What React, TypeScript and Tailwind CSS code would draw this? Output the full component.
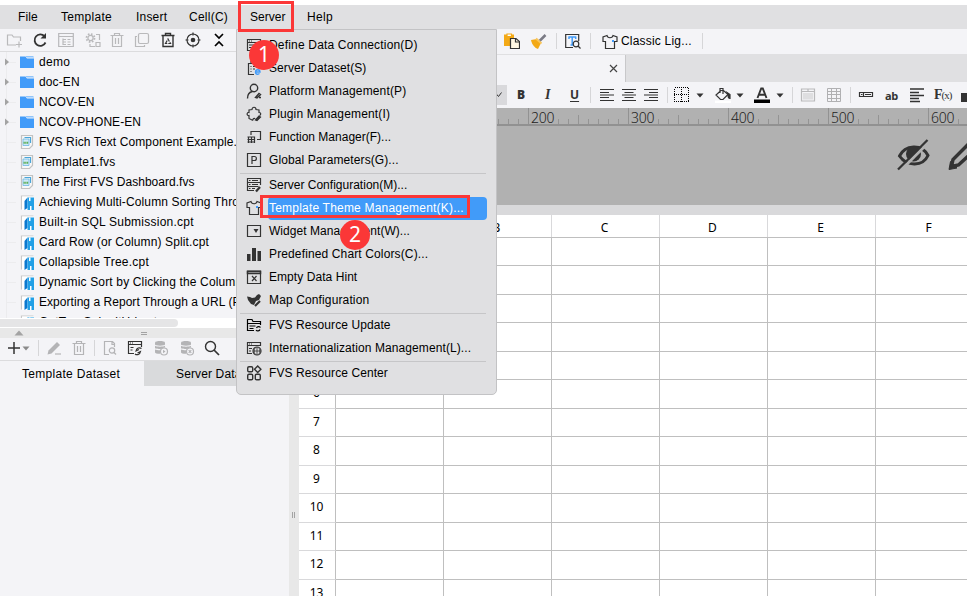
import type { ReactNode } from "react";
import clsx from "clsx";

interface IconProps {
  children: ReactNode;
  className?: string;
}

function Icon({ children, className }: IconProps) {
  return (
    <svg
      viewBox="0 0 16 16"
      fill="none"
      stroke="currentColor"
      strokeWidth="1.2"
      className={clsx("block h-4 w-4 shrink-0", className)}
    >
      {children}
    </svg>
  );
}

const windowFrame = <path d="M7 13.5H1.500v-12h13V7M1.500 4.500h13M3 3h1M5 3h1" />;

const shirt = (
  <>
    <path d="M5 1.500 1 3v4.500h2.500v7h9v-7H15V3l-4-1.500c-.5 3-5.500 3-6 0Z" />
    <path d="M10 6h2v2h-2z" fill="#419bf9" stroke="none" />
  </>
);

const icons: Record<string, ReactNode> = {
  define: <path d="M1.500 2.500h13v11h-13zM1.500 5.500h13M3 4h1M5 4h1M3 8h5M3 10.500h5" />,
  dataset: (
    <>
      <path d="M8 14.500H2.500v-11h10V7M5 3.500v-2h5v2M4.500 6.500h1M7 6.500h4M4.500 9h1M7 9h2M4.500 11.500h1" />
      <path d="M9.500 12h4.500c0-3-4.500-3-4.500 0s2.500 2.500 4 1.500" stroke="#419bf9" strokeWidth="1.400" />
    </>
  ),
  platform: (
    <>
      <circle cx="8" cy="5" r="3.700" strokeWidth="1.400" />
      <path d="M1.500 15.500c0-4 2-6.500 5-7M9.500 14.500l3.500-4 1.500 1-3.500 3.500zM13 14.500h2" strokeWidth="1.400" />
    </>
  ),
  plugin: (
    <>
      <path d="M7 14.500 3 12.500v-3c-2.500.5-2.500-3.500 0-3V4l3-.5c0-3 4-3 4 0l3 .5v2.500c2.500 0 2 2.500.500 3M7 14.500c-.5-2 1.500-2.500 2-1.500" />
      <path d="m9.500 14 3.500-4 1.500 1-3.500 3.500z" fill="currentColor" />
    </>
  ),
  func: (
    <>
      <path d="M5 6V2.500h9.500v8H11" />
      <path d="M1.500 8h7M1.500 10.500h7M1.500 13h7M2.500 7.500v6.500M5.500 7.500v6.500M8.500 7.500v6.500" strokeWidth="1.200" />
    </>
  ),
  global: <path d="M1.500 1.500h13v13h-13zM6 12V4.500h2.500c2.500 0 2.500 4 0 4H6" />,
  serverConfig: (
    <>
      <path d="M14.500 8V1.500h-13v4h13M1.500 5.500v4h11M1.500 9.500v4H8M3 3.500h1.500M6 3.500h6M3 7.500h1.500M6 7.500h6M3 11.500h1.500M6 11.500h3" />
      <path d="m10 14.500 4-4.500" strokeWidth="2.200" />
    </>
  ),
  theme: shirt,
  widget: (
    <>
      <path d="M1.500 2.500h13v11h-13z" />
      <path d="M7.500 6h5L10 10z" fill="currentColor" stroke="none" />
    </>
  ),
  chart: <path d="M1 8h3.500v7H1zM6 2h4v13H6zM11.500 5H15v10h-3.500z" fill="currentColor" stroke="none" />,
  empty: (
    <>
      <path d="M1.500 2h13v12.500h-13zM6 7l4.500 5M10.500 7 6 12" />
      <path d="M1.500 2.500h13v2h-13z" strokeWidth="1.500" />
    </>
  ),
  map: (
    <>
      <path d="m1 4.500 3 .5 2 1 3-.5L11 3l2-1 2 2-2 4-3 1-2 4-3-1-3-4z" fill="currentColor" stroke="none" />
      <path d="m9 14 5-5" strokeWidth="2.200" />
    </>
  ),
  resource: (
    <g className="text-black">
      <path d="M8 13.500H1.500v-11H6l1 2h7.500V8M1.500 6.500h13M3.500 9h6M3.500 11.500h4M14.500 10.500a2.300 2.300 0 0 0-4 .5M10 13a2.300 2.300 0 0 0 4-.5" />
    </g>
  ),
  international: (
    <>
      <path d="M6 13.500H1.500v-11h13V6M1.500 5.500h13M3 4h1M5 4h1M3 8.500h3M3 11h2" />
      <circle cx="11" cy="11" r="4" />
      <path d="M7 11h8M11 7v8M9 8c-1 2-1 4 0 6M13 8c1 2 1 4 0 6" strokeWidth=".8" />
    </>
  ),
  center: (
    <>
      <rect x="1.700" y="1.700" width="5" height="5" rx="1.300" strokeWidth="1.400" />
      <rect x="1.700" y="9.300" width="5" height="5.500" rx="1.300" strokeWidth="1.400" />
      <rect x="9.300" y="9.300" width="5" height="5.500" rx="1.300" strokeWidth="1.400" />
      <path d="m11.700 1 3.200 3.200-3.200 3.200-3.200-3.200z" strokeWidth="1.400" />
    </>
  ),
};

interface MenuEntry {
  icon: string;
  label: string;
  track: string;
  active?: boolean;
}

const menuGroups: MenuEntry[][] = [
  [
    { icon: "define", label: "Define Data Connection(D)", track: "tracking-[0.18px]" },
    { icon: "dataset", label: "Server Dataset(S)", track: "tracking-[0.08px]" },
    { icon: "platform", label: "Platform Management(P)", track: "tracking-[0.15px]" },
    { icon: "plugin", label: "Plugin Management(I)", track: "tracking-[0.15px]" },
    { icon: "func", label: "Function Manager(F)...", track: "tracking-[0px]" },
    { icon: "global", label: "Global Parameters(G)...", track: "tracking-[0.1px]" },
  ],
  [
    { icon: "serverConfig", label: "Server Configuration(M)...", track: "tracking-[0.01px]" },
    { icon: "theme", label: "Template Theme Management(K)...", track: "tracking-[0.2px]", active: true },
    { icon: "widget", label: "Widget Management(W)...", track: "tracking-[0.04px]" },
    { icon: "chart", label: "Predefined Chart Colors(C)...", track: "tracking-[0.13px]" },
    { icon: "empty", label: "Empty Data Hint", track: "tracking-[0.06px]" },
    { icon: "map", label: "Map Configuration", track: "tracking-[0.13px]" },
  ],
  [
    { icon: "resource", label: "FVS Resource Update", track: "tracking-[0.08px]" },
    { icon: "international", label: "Internationalization Management(L)...", track: "tracking-[0.09px]" },
  ],
  [{ icon: "center", label: "FVS Resource Center", track: "tracking-[0.08px]" }],
];

function ServerMenu() {
  return (
    <div className="absolute left-[236px] top-[29px] h-[366px] w-[261px] rounded-b-[5px] border border-[#c3c3c5] bg-[#e0e0e2] pt-1">
      {menuGroups.map((group, index) => (
        <div key={index}>
          {index > 0 && <div className="ml-[3px] mr-[10px] h-[2px] border-b border-[#c6c6c8]" />}
          {group.map((entry) => (
            <div key={entry.icon} className="flex h-[23px] items-center pl-[9px] pr-[9px] text-[#333]">
              <Icon className="mb-px">{icons[entry.icon]}</Icon>
              <span
                className={clsx(
                  "ml-[6px] flex h-full flex-1 items-center whitespace-nowrap rounded-[4px] pb-[2px] pl-px",
                  entry.track,
                  entry.active ? "bg-[#419bf9] text-white" : "text-black",
                )}
              >
                {entry.label}
              </span>
            </div>
          ))}
        </div>
      ))}
    </div>
  );
}

type FileKind = "folder" | "fvs" | "cpt";

const files: { name: string; kind: FileKind; track: string }[] = [
  { name: "demo", kind: "folder", track: "tracking-[0.3px]" },
  { name: "doc-EN", kind: "folder", track: "tracking-[0.13px]" },
  { name: "NCOV-EN", kind: "folder", track: "tracking-[0.13px]" },
  { name: "NCOV-PHONE-EN", kind: "folder", track: "tracking-[0.05px]" },
  { name: "FVS Rich Text Component Example.fvs", kind: "fvs", track: "tracking-[0.11px]" },
  { name: "Template1.fvs", kind: "fvs", track: "tracking-[0.18px]" },
  { name: "The First FVS Dashboard.fvs", kind: "fvs", track: "tracking-[0.03px]" },
  { name: "Achieving Multi-Column Sorting Through", kind: "cpt", track: "tracking-[0.14px]" },
  { name: "Built-in SQL Submission.cpt", kind: "cpt", track: "tracking-[0.24px]" },
  { name: "Card Row (or Column) Split.cpt", kind: "cpt", track: "tracking-[0.13px]" },
  { name: "Collapsible Tree.cpt", kind: "cpt", track: "tracking-[0.23px]" },
  { name: "Dynamic Sort by Clicking the Column", kind: "cpt", track: "tracking-[0.15px]" },
  { name: "Exporting a Report Through a URL (PDF)", kind: "cpt", track: "tracking-[0.04px]" },
  { name: "GetTreeSubmitUrl.cpt", kind: "cpt", track: "tracking-[0.13px]" },
];

function FileIcon({ kind }: { kind: FileKind }) {
  if (kind === "folder") {
    return (
      <Icon>
        <path d="M1 2.500h5.500l1.500 2h7v9.500H1z" fill="#419bf9" stroke="none" />
        <path d="M7 2.500h7.500M8 4h7" stroke="#8fc4fb" strokeWidth="1" />
      </Icon>
    );
  }
  if (kind === "fvs") {
    return (
      <Icon>
        <path d="M2.500 1.500h11v10l-3 3h-8z" fill="#f7f7f7" stroke="#c2c2c2" />
        <path d="M5.500 3.500h6v5.500" stroke="#4ba5d8" />
        <path d="M4 5h6v6.500H4z" fill="#cfe9f8" stroke="#6db8e2" strokeWidth=".8" />
        <path d="M4.500 8.700h5" stroke="#5faf55" strokeWidth="2" strokeDasharray="1.300 .4" />
      </Icon>
    );
  }
  return (
    <Icon>
      <path d="M2.500 15.500V2h12" stroke="#c9c9c9" />
      <path d="M3 2.500h12V16H3z" fill="#fff" stroke="none" />
      <path d="M5.500 7l3-3.500v10.500l-3 2z" fill="#0a78cf" stroke="none" />
      <path d="M8.500 3.500H15V16h-2.500v-4h-1.500v4H8.500z" fill="#22a0e6" stroke="none" />
      <path d="M10 3.500h1.500V7H10z" fill="#fff" stroke="none" />
    </Icon>
  );
}

function FileTree() {
  return (
    <div className="h-[266px] overflow-hidden">
      {files.map((file) => (
        <div key={file.name} className="flex h-5 items-center whitespace-nowrap">
          <svg viewBox="0 0 19 20" className="block h-5 w-[19px] shrink-0">
            <path d="M6.500 0v20M7 10.500h9" stroke="#ececee" />
            {file.kind === "folder" && <path d="M5 6.500v7l4-3.500z" fill="#a3a3a3" />}
          </svg>
          <FileIcon kind={file.kind} />
          <span className={clsx("ml-1", file.track)}>{file.name}</span>
        </div>
      ))}
    </div>
  );
}

const trash = <path d="M1.500 3.500h13M5.500 3.500v-2h5v2M3.500 3.500v11h9v-11M6.500 6v6M9.500 6v6" />;

const database = (
  <>
    <path d="M2 2.500c0-2 10-2 10 0v2c0 1.500-10 1.500-10 0z" fill="currentColor" stroke="none" />
    <path d="M2 5.800c2 1.200 8 1.200 10 0v1.700c-2 .3-4 1.300-4.500 1.500-2 0-5.500-.3-5.500-1zM2 9.500c1 .5 3 .8 5 .8v3.500c-3 0-5-.5-5-1.500z" fill="currentColor" stroke="none" />
    <circle cx="11" cy="11.500" r="3.500" />
  </>
);

function ExplorerToolbar() {
  return (
    <div className="flex h-[23px] items-center border-b border-[#dcdcde] pl-[6px] pb-[1px] text-[#b9b9bb]">
      <Icon>
        <path d="M10 13H1.500V3H6l1.500 2h7v4M13 9.500v6M10 12.500h6" />
      </Icon>
      <Icon className="ml-[10px] text-[#333]">
        <path d="M13.500 10.500A5.700 5.700 0 1 1 12.500 4.200" strokeWidth="1.800" />
        <path d="M14 1v5.500H8.500z" fill="currentColor" stroke="none" />
      </Icon>
      <Icon className="ml-[10px]">
        <path d="M.7 1.500h14.600v13H.7zM.7 4.500h14.600M5 6.500v6h3M5 7.500h3M5 10h3M9.500 7.500h3M9.500 10h3M9.500 12.500h3" />
      </Icon>
      <Icon className="ml-[11px]">
        <circle cx="5.500" cy="6" r="4" strokeWidth="1.800" strokeDasharray="1.600 1.540" />
        <circle cx="5.500" cy="6" r="2.600" />
        <path d="M11 2.500h3.500V8M5 12v2.500h5M11 10.500h4v4h-4z" />
      </Icon>
      <Icon className="ml-2">{trash}</Icon>
      <Icon className="ml-[9px]">
        <rect x="4.500" y="1.500" width="10" height="10" rx="1.500" />
        <path d="M3 4.500H1.500v10h9V13" />
      </Icon>
      <Icon className="ml-[10px] text-[#333]">
        <path d="M1.500 3.500h13M5.500 3.500v-2h5v2M3 3.500v11h10v-11" strokeWidth="1.400" />
        <path d="m5.500 11.500 2.500-4.500 2.500 4.500z" strokeDasharray="3.500 1" />
      </Icon>
      <Icon className="ml-[9px] text-[#333]">
        <circle cx="8" cy="8" r="6" />
        <circle cx="8" cy="8" r="2.300" fill="currentColor" stroke="none" />
        <path d="M8 .5v3M8 12.500v3M.5 8h3M12.500 8h3" />
      </Icon>
      <Icon className="ml-[10px] text-black">
        <path d="m4 2 4 4 4-4M4 14l4-4 4 4" strokeWidth="1.700" />
      </Icon>
    </div>
  );
}

function DatasetToolbar() {
  return (
    <div className="flex h-[23px] items-center border-b border-[#dcdcde] pb-[2px] pl-[6px] text-[#b4b4b6]">
      <Icon className="text-[#333]">
        <path d="M8 2v12M2 8h12" strokeWidth="1.500" />
      </Icon>
      <Caret className="text-[#8a8a8a]" />
      <Divider className="ml-2" />
      <Icon className="ml-[7px]">
        <path d="m1.500 14.500 1-4L11 2l3 3-8.500 8.500z" fill="currentColor" stroke="none" />
        <path d="M9 14h6" />
      </Icon>
      <Icon className="ml-[9px]">{trash}</Icon>
      <Divider className="ml-[7px]" />
      <Icon className="ml-[7px]">
        <path d="M7 14.500H2.500v-13h8l2 2V7M10 1.500v3h2.500" />
        <circle cx="10" cy="10.500" r="2.700" />
        <path d="m12 12.500 2 2" />
      </Icon>
      <Icon className="ml-[9px] text-[#333]">
        {windowFrame}
        <path d="M3.500 7.500h3M3.500 10h2" />
        <path d="M14.500 8.500c-2-1.500-5-.5-5.500 2.500l3-1.500M8 14c2 1.500 5 .5 5.500-2.500l-3 1.500" />
      </Icon>
      <Icon className="ml-[10px]">
        {database}
        <path d="M10 9.700v3.600l2.500-1.800z" fill="currentColor" stroke="none" />
      </Icon>
      <Icon className="ml-[10px]">
        {database}
        <path d="m9.700 10.200 2.600 2.600M12.300 10.200l-2.600 2.600" />
      </Icon>
      <Icon className="ml-[9px] text-[#333]">
        <circle cx="6.500" cy="6.500" r="5" strokeWidth="1.400" />
        <path d="m10 10 5 5" strokeWidth="1.700" />
      </Icon>
    </div>
  );
}

function Caret({ className }: { className?: string }) {
  return (
    <svg viewBox="0 0 8 8" className={clsx("block h-2 w-2 shrink-0", className)}>
      <path d="M.5 2.500h7L4 6.500z" fill="currentColor" />
    </svg>
  );
}

function Divider({ className }: { className?: string }) {
  return <div className={clsx("h-4 w-px shrink-0 bg-[#d6d6d8]", className)} />;
}

function Sidebar() {
  return (
    <aside className="flex w-[289px] shrink-0 flex-col bg-[#f4f4f7]">
      <ExplorerToolbar />
      <FileTree />
      <div className="h-[10px] bg-white pt-px">
        <div className="h-[8px] w-[178px] rounded-r bg-[#e5e5e6]" />
      </div>
      <div className="flex h-[10px] items-center bg-[#e8e8e8] pl-[14px]">
        <svg viewBox="0 0 10 6" className="block h-[6px] w-[10px]">
          <path d="M5 .5 9.500 5.500H.5z" fill="#a3a3a3" />
        </svg>
        <div className="ml-[117px] h-[3px] w-[6px] border-y border-[#a3a3a3]" />
      </div>
      <DatasetToolbar />
      <div className="flex h-[25px]">
        <div className="flex w-36 items-center pl-[22px] tracking-[0.3px]">Template Dataset</div>
        <div className="flex flex-1 items-center whitespace-nowrap bg-[#d9dadc] pl-8 tracking-[0.13px]">Server Dataset</div>
      </div>
    </aside>
  );
}

function MainToolbar() {
  return (
    <div className="flex h-[26px] items-center border-b border-[#e0e0e2] bg-[#f4f4f7] pb-px pl-[205px] text-[#333]">
      <Icon>
        <path d="M0 1.500h10V13H0z" fill="#f3a916" stroke="none" />
        <path d="M3 1h4.500v2.500H3z" fill="#fff" stroke="#f3a916" />
        <path d="M6.500 5.500h5.500l3.500 3v7h-9z" fill="#fff7e3" />
        <path d="M11.500 5.500v3.500h4" />
      </Icon>
      <Icon className="ml-[11px]">
        <path d="m0 7 6-1 4 4-3 6c-3-1-6-4-7-9z" fill="#f3a916" stroke="none" />
        <path d="m8.500 8 6-6" stroke="#7b7b85" strokeWidth="2.500" />
        <path d="m5 5.500 5.500 5" stroke="#f9c55b" strokeWidth="2" />
      </Icon>
      <Divider className="ml-[9px]" />
      <Icon className="ml-2">
        <path d="M8 14.500H.7V1.500h13V8" />
        <path d="M3.500 4h7.500M7.200 4v8M5.500 12H9M4 3.500V6M10.700 3.500V6" stroke="#419bf9" strokeWidth="1.500" />
        <circle cx="11" cy="11" r="2.800" fill="#f4f4f7" />
        <path d="m13 13 2.500 2.500" />
      </Icon>
      <Divider className="ml-[9px]" />
      <Icon className="ml-[11px] mt-px">{shirt}</Icon>
      <span className="ml-[3px] w-[71px] whitespace-nowrap tracking-[0.2px] text-black">Classic Lig...</span>
      <Divider className="ml-[10px]" />
    </div>
  );
}

function FormatToolbar() {
  return (
    <div className="flex h-[26px] items-center overflow-hidden bg-[#f4f4f7] pl-[190px] font-['Open_Sans',sans-serif] text-[#333]">
      <div className="flex h-5 w-[18px] shrink-0 items-center bg-[#d9d9dc] pl-[6px]">
        <svg viewBox="0 0 8 6" className="h-[6px] w-2" fill="none" stroke="currentColor">
          <path d="m.5 1 3 3.500 3-4" />
        </svg>
      </div>
      <span className="ml-[10px] w-2 text-[12px] font-extrabold">B</span>
      <span className="ml-5 w-2 font-['Liberation_Serif',serif] text-[14px] font-bold italic">I</span>
      <span className="ml-[17px] w-[9px] text-[12px] font-bold underline underline-offset-2">U</span>
      <Divider className="ml-[11px]" />
      <Icon className="ml-2">
        <path d="M1 2.500h14M1 5.500h9M1 8h14M1 10.500h9M1 13.500h14" />
      </Icon>
      <Icon className="ml-[6px]">
        <path d="M1 2.500h14M3.500 5.500h9M1 8h14M3.500 10.500h9M1 13.500h14" />
      </Icon>
      <Icon className="ml-[6px]">
        <path d="M1 2.500h14M6 5.500h9M1 8h14M6 10.500h9M1 13.500h14" />
      </Icon>
      <Divider className="ml-2" />
      <Icon className="ml-[6px] text-black">
        <path d="M.5.5h14v14H.5zM7.500 0v15M0 7.500h15" strokeWidth="1" strokeDasharray="1 1" shapeRendering="crispEdges" />
      </Icon>
      <Caret className="ml-[6px]" />
      <Icon className="ml-[11px]">
        <path d="M5 6V1.500h3V7M6 3.500 1 8l4.500 4.500H8l5-5-4.500-4z" />
        <path d="m12 5.500 3 2v4c-2 0-2-2-2-4z" fill="currentColor" />
        <path d="M0 13.500h16V16H0z" fill="#fff" stroke="none" />
      </Icon>
      <Caret className="ml-[5px]" />
      <Icon className="ml-[10px]">
        <path d="M3.500 11 7.200 1.500h1.600L12.500 11M5 7.800h6" strokeWidth="1.900" />
        <path d="M0 12.500h16V16H0z" fill="#000" stroke="none" />
      </Icon>
      <Caret className="ml-[6px]" />
      <Divider className="ml-2" />
      <Icon className="ml-[7px] text-[#b9b9bb]">
        <path d="M1.500 2h13v12h-13zM1.500 4.500h13M8 2v2.500" />
        <path d="M3 6h10v6.500H3z" fill="#dedee0" stroke="none" />
      </Icon>
      <Icon className="ml-[10px] text-[#b0b0b2]">
        <path d="M1.500 1.500h13v13h-13zM1.500 4.500h13M1.500 7.500h13M1.500 11.500h13M5.500 1.500v13M10.500 1.500v13" strokeWidth="1" />
      </Icon>
      <Divider className="ml-2" />
      <Icon className="ml-[7px]">
        <path d="M1.500 5.500h13v4h-13zM5.500 5.500v4" strokeWidth="1.200" />
        <path d="M3 7.500h1.500M7 7.500h6" />
      </Icon>
      <span className="ml-[11px] w-[13px] text-[11px] font-bold leading-none tracking-[-0.3px]">ab</span>
      <Icon className="ml-[11px]">
        <path d="M1 2h14M1 5.500h9M1 8.500h14M1 11.500h9M1 14.500h10" strokeWidth="1.600" />
      </Icon>
      <span className="ml-[9px] w-[17px] whitespace-nowrap font-['Liberation_Serif',serif] text-[14px] font-bold tracking-[-1px]">
        F<span className="text-[11px] font-normal">(x)</span>
      </span>
      <div className="ml-[10px] mt-1 h-[9px] w-[6px] shrink-0 bg-[#333]" />
    </div>
  );
}

const rulerMarks = [0, 100, 200, 300, 400, 500, 600];
const ticks = [3, 4, 5, 6, 7, 8, 9];

function Ruler() {
  return (
    <div className="flex h-[18px] overflow-hidden border-b-2 border-[#919191] bg-[#b1b1b1] pl-[29px]">
      {rulerMarks.map((mark) => (
        <div key={mark} className="flex w-[100px] shrink-0 items-end border-l border-[#929292]">
          <span className="flex h-full w-[29px] shrink-0 items-center pl-[2px] pt-[3px] font-['Noto_Sans',sans-serif] text-[14px] font-light leading-none tracking-[-0.2px] text-[#222]">
            {mark}
          </span>
          {ticks.map((tick) => (
            <div
              key={tick}
              className={clsx("w-[10px] shrink-0 border-l border-[#949494]", tick === 5 ? "h-[9px]" : "h-[5px]")}
            />
          ))}
        </div>
      ))}
    </div>
  );
}

function ReportHeader() {
  return (
    <div className="flex h-[79px] overflow-hidden bg-[#b1b1b1] pl-[598px] pt-[13px] text-[#333]">
      <svg viewBox="0 0 34 32" className="h-8 w-[34px] shrink-0" fill="none" stroke="currentColor">
        <path d="M2.500 17C8 5.500 25 4.500 31 16.500 26 27.500 10 28 2.500 17Z" strokeWidth="3" />
        <circle cx="16.500" cy="15" r="7.500" fill="currentColor" stroke="none" />
        <path d="M3.500 31.500 32 3" stroke="#b1b1b1" strokeWidth="3" />
        <path d="M1 30.500 30.500 1" strokeWidth="2.300" />
      </svg>
      <svg viewBox="0 0 30 30" className="ml-[17px] mt-[2px] h-[30px] w-[30px] shrink-0" fill="none" stroke="currentColor">
        <path d="m3.500 25.500 1.500-7L20 3.500l6 6L10.500 24z" strokeWidth="3.500" />
        <path d="m1 28.500 1.500-8 6.500 6.500z" fill="currentColor" />
      </svg>
    </div>
  );
}

const columns = ["A", "B", "C", "D", "E", "F"];
const rows = [1, 2, 3, 4, 5, 6, 7, 8, 9, 10, 11, 12, 13];

function Sheet() {
  return (
    <div className="flex-1 overflow-hidden bg-white font-['Noto_Sans',sans-serif] text-[12px] text-black">
      <div className="flex h-[23px] border-b border-[#bfbfbf]">
        <div className="w-[37px] shrink-0 border-r border-[#d9d9db]" />
        {columns.map((column) => (
          <div key={column} className="flex w-[108px] shrink-0 items-center justify-center border-r border-[#d9d9db] pr-[2px] pt-[4px]">
            {column}
          </div>
        ))}
      </div>
      {rows.map((row) => (
        <div key={row} className={clsx("flex", row % 2 ? "h-[28px]" : "h-[29px]")}>
          <div className="flex w-[37px] shrink-0 items-center justify-center border-b border-r border-b-[#d9d9db] border-r-[#bfbfbf] pb-[2px] pr-px">
            {row}
          </div>
          {columns.map((column) => (
            <div key={column} className="w-[108px] shrink-0 border-b border-r border-[#bfbfbf]" />
          ))}
        </div>
      ))}
    </div>
  );
}

function Workspace() {
  return (
    <main className="flex min-w-0 flex-1 flex-col">
      <MainToolbar />
      <div className="flex h-[27px] bg-[#e0e0e2]">
        <div className="flex w-[327px] items-center justify-end border-r border-[#c8c8ca] bg-[#f4f4f7] pr-[7px]">
          <svg viewBox="0 0 9 9" className="h-[9px] w-[9px]" stroke="#444" strokeWidth="1.200">
            <path d="m1 1 7 7M8 1 1 8" />
          </svg>
        </div>
      </div>
      <FormatToolbar />
      <Ruler />
      <ReportHeader />
      <div className="h-[10px] shrink-0 bg-[#d9d9db]" />
      <Sheet />
    </main>
  );
}

const menuBar = [
  { label: "File", className: "w-[43px] tracking-[0.1px]" },
  { label: "Template", className: "w-[75px] tracking-[0.3px]" },
  { label: "Insert", className: "w-[53px] tracking-[0.2px]" },
  { label: "Cell(C)", className: "w-[61px] tracking-[0.25px]" },
  { label: "Server", className: "w-[57px] tracking-[0.05px]" },
  { label: "Help", className: "w-[60px] tracking-[0.3px]" },
];

export default function App() {
  return (
    <div className="relative flex h-[596px] w-[967px] flex-col overflow-hidden bg-white pt-[5px] font-['Liberation_Sans',Arial,sans-serif] text-[12px] leading-4 text-black">
      <nav className="flex h-6 shrink-0 items-center bg-[#e0e0e2] pl-[18px]">
        {menuBar.map((item) => (
          <span key={item.label} className={item.className}>
            {item.label}
          </span>
        ))}
      </nav>
      <div className="flex min-h-0 flex-1">
        <Sidebar />
        <div className="flex w-[10px] shrink-0 items-center justify-center bg-[#e8e8e8] pr-[2px] pt-[405px]">
          <div className="h-[6px] w-[3px] border-x border-[#a3a3a3]" />
        </div>
        <Workspace />
      </div>

      <ServerMenu />

      {/* Step callouts */}
      <div className="absolute left-[238px] top-px h-[31px] w-[56px] border-[3px] border-[#fb3737]" />
      <div className="absolute left-[260px] top-[195px] h-[23px] w-[210px] border-[3px] border-[#fb3737]" />
      <div className="absolute left-[249px] top-[40px] flex h-[30px] w-[30px] items-center justify-center rounded-full bg-[#fb3737] pb-[2px] font-['Noto_Sans',sans-serif] text-[21px] text-white">
        1
      </div>
      <div className="absolute left-[340px] top-[220px] flex h-[30px] w-[30px] items-center justify-center rounded-full bg-[#fb3737] pb-[2px] font-['Noto_Sans',sans-serif] text-[21px] text-white">
        2
      </div>
    </div>
  );
}
